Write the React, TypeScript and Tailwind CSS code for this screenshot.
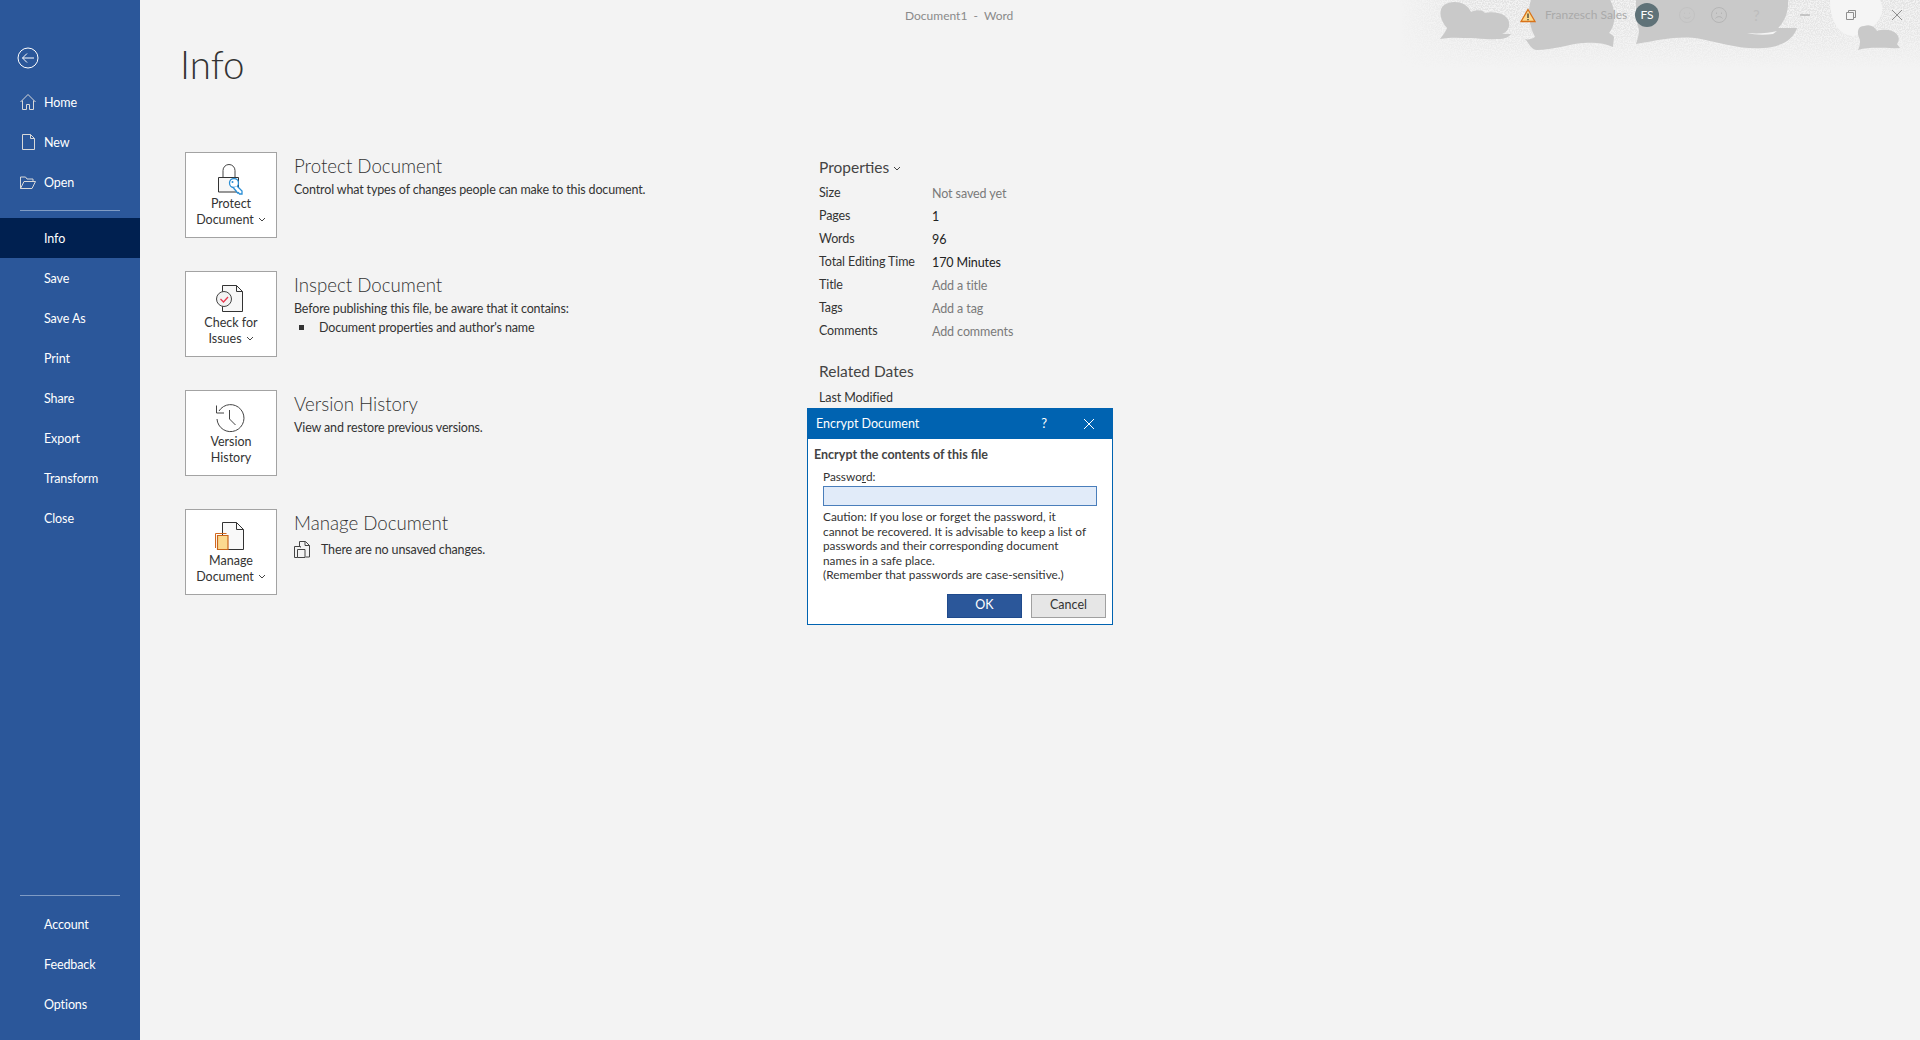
import type { ReactNode } from 'react';

const Chevron = () => (
  <svg viewBox="0 0 8 5" className="inline-block w-2 h-[5px] ml-1 mb-[2px]" fill="none" stroke="#444" strokeWidth="1">
    <path d="M1 1l3 3 3-3" />
  </svg>
);

const LockIcon = () => (
  <svg viewBox="0 0 32 32" className="w-8 h-8" fill="none">
    <path d="M9.5 13V6.5a6 6 0 0 1 12 0V13" transform="translate(-.5 0)" stroke="#444" />
    <path d="M4.5 13.5h20v14.5h-20z" fill="#f7f7f7" stroke="#333" />
    <circle cx="20" cy="19" r="4.5" fill="#fff" stroke="#2b8fd6" strokeWidth="1.3" />
    <path d="M23 22l5 5v3h-2.500l-1-1.500-1 .5-1-1.500-3-3.500" fill="#fff" stroke="#2b8fd6" strokeWidth="1.300" />
    <circle cx="18.500" cy="18" r="1" fill="#2b8fd6" />
  </svg>
);

const CheckIcon = () => (
  <svg viewBox="0 0 32 32" className="w-8 h-8" fill="none">
    <path d="M8.500 2.500h14l6 6v20h-20z" fill="#f7f7f7" stroke="#333" />
    <path d="M22.500 2.500v6h6" stroke="#333" />
    <circle cx="10" cy="16" r="7.500" fill="#f2f2f2" stroke="#444" />
    <path d="M6.500 16l3 3 4.500-5" stroke="#e8384f" strokeWidth="1.300" />
  </svg>
);

const HistoryIcon = () => (
  <svg viewBox="0 0 32 32" className="w-8 h-8" fill="none" stroke="#444">
    <path d="M5 9a13.500 13.500 0 1 1-2 8" />
    <path d="M2.500 3.500v7.500h7.500" />
    <path d="M15.500 8v9l6 6" />
  </svg>
);

const ManageIcon = () => (
  <svg viewBox="0 0 32 32" className="w-8 h-8" fill="none">
    <path d="M8.500 1.500h14l7 7v20h-21z" fill="#f9f9f9" stroke="#333" />
    <path d="M22.500 1.500v7h7" stroke="#333" />
    <path d="M1.500 27V12.500h11" stroke="#d2691e" />
    <path d="M3.500 14.500h10.500v14h-10.500z" fill="#fbd98f" stroke="#c8651b" strokeWidth="1.200" />
  </svg>
);

const SmallDocs = () => (
  <svg viewBox="0 0 16 17" className="w-4 h-[17px] shrink-0" fill="none" stroke="#444">
    <path d="M5.500 5V.5h6l4 4v11.500h-4" />
    <path d="M11 .5v4h4.500" />
    <path d="M.5 5.500h6v1M.5 5.500V16.500h3" />
    <path d="M3.500 8.500h7.500v8h-7.500z" />
  </svg>
);

function NavItem({ label, active, icon }: { label: string; active?: boolean; icon?: ReactNode }) {
  return (
    <div className={`h-10 flex items-center text-[12.500px] tracking-[-0.1px] text-white ${active ? 'bg-[#002050]' : ''}`}>
      <span className="w-11 shrink-0 pl-5">
        <span className="w-4 flex justify-center">{icon}</span>
      </span>
      <span className="pt-[2px]">{label}</span>
    </div>
  );
}

function Tile({ icon, lines, arrow }: { icon: ReactNode; lines: string[]; arrow?: boolean }) {
  return (
    <div className="w-[92px] h-[86px] shrink-0 bg-white border border-[#a3a3a3] flex flex-col items-center pt-[11px] text-[12.500px] leading-4 text-[#333]">
      <div className="-ml-[2px]">{icon}</div>
      <div className="text-center whitespace-nowrap">{lines[0]}</div>
      <div className="text-center whitespace-nowrap">
        {lines[1]}
        {arrow && <Chevron />}
      </div>
    </div>
  );
}

function Section({ tile, title, children }: { tile: ReactNode; title: string; children: ReactNode }) {
  return (
    <div className="flex h-[119px]">
      {tile}
      <div className="ml-[17px] text-[#333]">
        <h2 className="text-[18.700px] font-light leading-[26px] mt-[1px] text-[#333]">{title}</h2>
        <div className="text-[12.500px] tracking-[-0.15px] leading-[19px] mt-[1px]">{children}</div>
      </div>
    </div>
  );
}

const props = [
  ['Size', 'Not saved yet', true],
  ['Pages', '1', false],
  ['Words', '96', false],
  ['Total Editing Time', '170 Minutes', false],
  ['Title', 'Add a title', true],
  ['Tags', 'Add a tag', true],
  ['Comments', 'Add comments', true],
] as const;

function Clouds() {
  return (
    <svg viewBox="0 0 520 80" className="absolute right-0 top-0 w-[520px] h-[80px]">
      <defs>
        <filter id="speck" x="0" y="0" width="100%" height="100%">
          <feTurbulence type="fractalNoise" baseFrequency="0.85" numOctaves="2" seed="4" />
          <feColorMatrix values="0 0 0 0 .76  0 0 0 0 .76  0 0 0 0 .76  3 3 0 0 -2.500" />
        </filter>
        <linearGradient id="fade" x1="0" y1="0" x2="0" y2="1">
          <stop offset="0" stopColor="#fff" />
          <stop offset="0.350" stopColor="#fff" stopOpacity="0.800" />
          <stop offset="0.850" stopColor="#fff" stopOpacity="0" />
        </linearGradient>
        <linearGradient id="fadex" x1="0" y1="0" x2="1" y2="0">
          <stop offset="0" stopColor="#000" />
          <stop offset="0.150" stopColor="#fff" />
        </linearGradient>
        <mask id="fademask">
          <rect width="520" height="80" fill="url(#fade)" />
        </mask>
        <mask id="fademaskx">
          <rect width="520" height="80" fill="url(#fadex)" />
        </mask>
      </defs>
      <g mask="url(#fademaskx)">
        <rect width="520" height="80" filter="url(#speck)" mask="url(#fademask)" />
      </g>
      <path d="M430 0h50c6 10 0 26-18 33l-8 3c-12 0-24-10-24-36z" fill="#f5f5f5" />
      <path d="M40 39c3-4 6-8 7-11-7-8-9-18-3-23 8-5 22-4 27 7 6-3 12-2 14 1 8-2 22 0 24 9 1 6-2 10-7 12l9 0c-2 3-6 5-14 5-10 1-18-1-26-1-10 0-20-1-31 1z" fill="#c9c9c9" />
      <path d="M125 39c3 1 7 0 10-2-6-12-8-26-4-37h79c5 8 7 24-1 33 2 1 4 2 5 4l-1 10c-8-4-18-5-30-4-14 1-30 7-46 7-6 0-8-7-12-11z" fill="#c9c9c9" />
      <path d="M236 44c2-6 3-10 3-14-3-10-3-22-3-30h152c1 10-3 22-10 28l19 0c-4 12-16 19-34 20-20 2-42-5-62-9-22-4-40 1-65 5z" fill="#c9c9c9" />
      <path d="M347 33c12 1 22 0 30-2l-4 3c-8 1-18 1-26-1z" fill="#f5f5f5" />
      <path d="M458 50c2-4 2-7 2-10-4-8-2-14 4-14 6-2 10 0 13 5 6-2 12-1 15 0 6 2 9 8 5 13l3 4c-12 1-28-2-42 2z" fill="#c9c9c9" />
    </svg>
  );
}

function TitleBar() {
  return (
    <div className="relative h-[30px] flex items-center text-[12px]">
      <Clouds />
      <div className="absolute left-[765px] top-[7px] text-[#8a8a8a] whitespace-pre">Document1  -  Word</div>
      <div className="relative ml-auto flex items-center h-[30px] text-[#a9a9a9]">
        <svg viewBox="0 0 16 14" className="w-4 h-[15px] mr-[9px]">
          <path d="M8 1L15 13H1z" fill="#fbd98f" stroke="#d9731a" strokeWidth="1.300" />
          <path d="M8 5v4.500M8 10.500v1.200" stroke="#222" strokeWidth="1.100" />
        </svg>
        <span className="w-[90px]">Franzesch Sales</span>
        <span className="w-6 h-6 rounded-full bg-[#5f7278] text-white text-[12px] flex items-center justify-center">FS</span>
        <svg viewBox="0 0 16 16" className="w-4 h-4 ml-[20px]" fill="none" stroke="#c2c2c2">
          <circle cx="8" cy="8" r="7.500" />
          <path d="M4.500 9.500c1.500 2.500 5.500 2.500 7 0M5.500 5.500v1.500M10.500 5.500v1.500" />
        </svg>
        <svg viewBox="0 0 16 16" className="w-4 h-4 ml-4" fill="none" stroke="#b5b5b5">
          <circle cx="8" cy="8" r="7.500" />
          <path d="M4.500 11.500c1.500-2.500 5.500-2.500 7 0M5.500 5.500v1.500M10.500 5.500v1.500" />
        </svg>
        <span className="w-[10px] ml-[26px] text-[15px] text-[#bdbdbd]">?</span>
        <svg viewBox="0 0 10 10" className="w-[10px] h-[10px] ml-[37px]" fill="none" stroke="#a0a0a0">
          <path d="M0 5h10" />
        </svg>
        <svg viewBox="0 0 10 10" className="w-[10px] h-[10px] ml-[36px]" fill="none" stroke="#8f8f8f">
          <path d="M2.500 2.500V.5h7v7h-2M.5 2.500h7v7h-7z" />
        </svg>
        <svg viewBox="0 0 10 10" className="w-[10px] h-[10px] ml-[36px] mr-[18px]" fill="none" stroke="#8f8f8f">
          <path d="M0 0l10 10M10 0L0 10" />
        </svg>
      </div>
    </div>
  );
}

function EncryptDialog() {
  return (
    <div className="absolute left-[667px] top-[408px] w-[306px] h-[217px] bg-white border border-[#0063b1] text-[11.800px] text-[#333] flex flex-col">
      <div className="h-[30px] bg-[#0063b1] text-white flex items-center pl-2 text-[12.500px]">
        <span>Encrypt Document</span>
        <span className="ml-auto text-[13px] mr-[36px]">?</span>
        <svg viewBox="0 0 12 12" className="w-3 h-3 mr-[17px]" fill="none" stroke="#fff">
          <path d="M1 1l10 10M11 1L1 11" />
        </svg>
      </div>
      <div className="pl-[6px] pt-[8px] leading-4 font-bold text-[12.500px] text-[#444]">Encrypt the contents of this file</div>
      <div className="pl-[15px] pt-[6px] leading-[15px]">
        Passwo<span className="underline">r</span>d:
      </div>
      <div className="ml-[15px] mt-[2px] w-[274px] h-5 bg-[#e1ebf9] border border-[#4a7ebb]" />
      <p className="pl-[15px] pt-[4px] leading-[14.500px] whitespace-nowrap">
        Caution: If you lose or forget the password, it
        <br />
        cannot be recovered. It is advisable to keep a list of
        <br />
        passwords and their corresponding document
        <br />
        names in a safe place.
        <br />
        (Remember that passwords are case-sensitive.)
      </p>
      <div className="flex justify-end gap-[9px] pr-[6px] mt-[11px] text-[12.500px]">
        <button className="w-[75px] h-6 bg-[#2b579a] border border-[#1f4a8c] text-white">OK</button>
        <button className="w-[75px] h-6 bg-[#e6e6e6] border border-[#a0a0a0] text-[#333]">Cancel</button>
      </div>
    </div>
  );
}

export default function App() {
  return (
    <div className="w-[1920px] h-[1040px] overflow-hidden flex bg-[#f3f3f3] font-['Lato','Open_Sans',sans-serif]">
      {/* Backstage nav */}
      <aside className="w-[140px] shrink-0 bg-[#2b579a] flex flex-col pb-[16px]">
        <div className="h-[82px] pt-[47px] pl-[17px]">
          <svg viewBox="0 0 22 22" className="w-[22px] h-[22px]" fill="none" stroke="#fff">
            <circle cx="11" cy="11" r="10" />
            <path d="M17 11H5.500M10 6.500L5.500 11l4.500 4.500" />
          </svg>
        </div>
        <NavItem
          label="Home"
          icon={
            <svg viewBox="0 0 16 16" className="w-4 h-4" fill="none" stroke="#d9d9d9">
              <path d="M.5 8L8 .5 15.500 8M2.500 6.500v9h4v-5h3v5h4v-9" />
            </svg>
          }
        />
        <NavItem
          label="New"
          icon={
            <svg viewBox="0 0 13 16" className="w-[13px] h-4" fill="none" stroke="#d9d9d9">
              <path d="M.5.500h8l4 4v11h-12zM8.500.500v4h4" />
            </svg>
          }
        />
        <NavItem
          label="Open"
          icon={
            <svg viewBox="0 0 16 13" className="w-4 h-[13px]" fill="none" stroke="#d9d9d9">
              <path d="M.5 12.500V1h5l1.500 2h6v2.500M.5 12.500h11.500l3.500-7H4z" />
            </svg>
          }
        />
        <div className="h-px mx-5 bg-[#7f9bc4] mt-[8px] mb-[7px]" />
        <NavItem label="Info" active />
        {['Save', 'Save As', 'Print', 'Share', 'Export', 'Transform', 'Close'].map((l) => (
          <NavItem key={l} label={l} />
        ))}
        <div className="mt-auto h-px mx-5 bg-[#7f9bc4] mb-[8px]" />
        {['Account', 'Feedback', 'Options'].map((l) => (
          <NavItem key={l} label={l} />
        ))}
      </aside>

      <main className="relative flex-1 flex flex-col">
        <TitleBar />
        <h1 className="ml-[40px] mt-[9px] h-[113px] text-[38.500px] leading-[50px] font-light text-[#333]">Info</h1>
        <div className="flex pl-[45px]">
          <div className="w-[634px]">
            <Section
              title="Protect Document"
              tile={<Tile icon={<LockIcon />} lines={['Protect', 'Document']} arrow />}
            >
              Control what types of changes people can make to this document.
            </Section>
            <Section
              title="Inspect Document"
              tile={<Tile icon={<CheckIcon />} lines={['Check for', 'Issues']} arrow />}
            >
              <div>Before publishing this file, be aware that it contains:</div>
              <div className="flex items-center">
                <span className="w-[5px] h-[5px] bg-[#333] ml-[5px] mr-[15px]" />
                Document properties and author's name
              </div>
            </Section>
            <Section title="Version History" tile={<Tile icon={<HistoryIcon />} lines={['Version', 'History']} />}>
              View and restore previous versions.
            </Section>
            <Section
              title="Manage Document"
              tile={<Tile icon={<ManageIcon />} lines={['Manage', 'Document']} arrow />}
            >
              <div className="flex items-center gap-[11px] mt-[4px]">
                <SmallDocs />
                There are no unsaved changes.
              </div>
            </Section>
          </div>
          <div className="text-[12.500px] tracking-[-0.1px] text-[#333]">
            <div className="text-[15.500px] tracking-normal leading-6 pt-[3px] text-[#444]">
              Properties
              <Chevron />
            </div>
            <div className="mt-[3px]">
              {props.map(([k, v, muted]) => (
                <div key={k} className="flex h-[23px] items-center">
                  <span className="w-[113px]">{k}</span>
                  <span className={`pt-[2px] ${muted ? 'text-[#7a7a7a]' : 'text-[#222]'}`}>{v}</span>
                </div>
              ))}
            </div>
            <div className="text-[15.500px] tracking-normal leading-6 mt-[16px] text-[#444]">Related Dates</div>
            <div className="mt-[5px] leading-[20px]">Last Modified</div>
          </div>
        </div>
        <EncryptDialog />
      </main>
    </div>
  );
}
